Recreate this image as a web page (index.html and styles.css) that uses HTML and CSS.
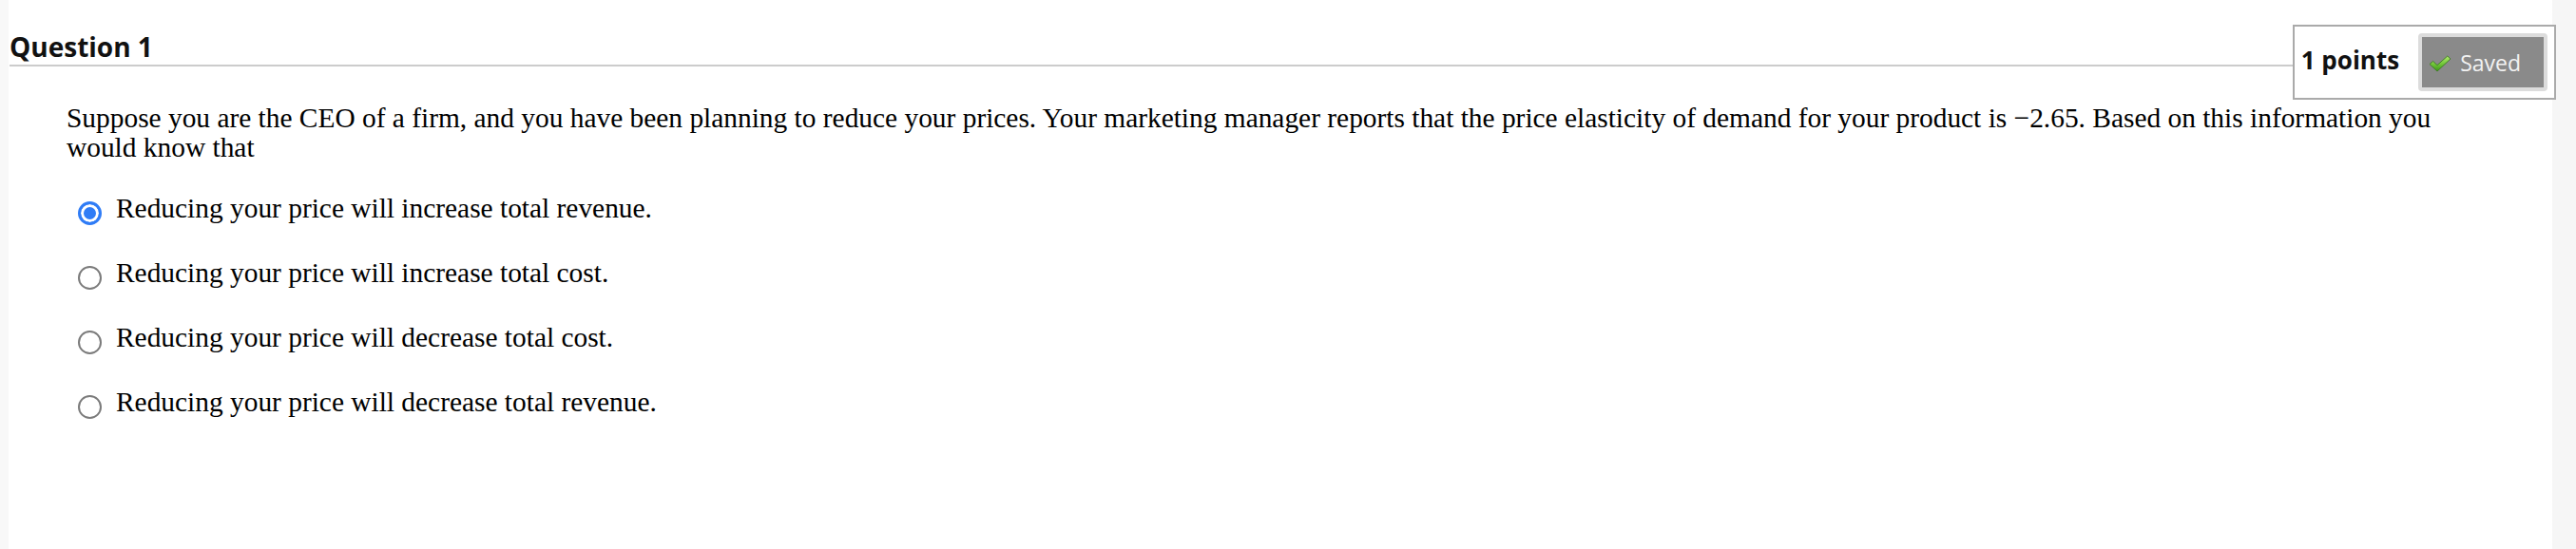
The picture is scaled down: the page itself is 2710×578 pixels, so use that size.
FILE: index.html
```html
<!DOCTYPE html>
<html lang="en">
<head>
<meta charset="utf-8">
<title>Question 1</title>
<link rel="stylesheet" href="styles.css">
</head>
<body>
<div class="page">
  <div class="gutter-left"></div>
  <main class="main">
    <div class="q-header">
      <h2 class="q-title">Question 1</h2>
      <div class="points-box">
        <span class="points">1 points</span>
        <div class="saved-btn">
          <svg class="check" width="24" height="18" viewBox="0 0 24 18" aria-hidden="true">
            <defs>
              <linearGradient id="g" x1="0" y1="0" x2="0" y2="1">
                <stop offset="0" stop-color="#b4ea6e"/>
                <stop offset="0.5" stop-color="#74c83a"/>
                <stop offset="1" stop-color="#3a9418"/>
              </linearGradient>
            </defs>
            <path d="M1 9.5 L4.6 6.4 L9 10.6 L19.8 1 L23 4 L9 17 Z" fill="url(#g)" stroke="#3c7a22" stroke-width="0.9" stroke-linejoin="round"/>
          </svg>
          <span class="saved-text">Saved</span>
        </div>
      </div>
    </div>
    <p class="q-text">Suppose you are the CEO of a firm, and you have been planning to reduce your prices. Your marketing manager reports that the price elasticity of demand for your product is −2.65. Based on this information you would know that</p>
    <div class="options">
      <label class="option"><input type="radio" name="q1" class="radio" checked><span>Reducing your price will increase total revenue.</span></label>
      <label class="option"><input type="radio" name="q1" class="radio"><span>Reducing your price will increase total cost.</span></label>
      <label class="option"><input type="radio" name="q1" class="radio"><span>Reducing your price will decrease total cost.</span></label>
      <label class="option"><input type="radio" name="q1" class="radio"><span>Reducing your price will decrease total revenue.</span></label>
    </div>
  </main>
  <div class="gutter-right"></div>
</div>
</body>
</html>
```

FILE: styles.css
```css
html, body {
  margin: 0;
  padding: 0;
  background: #ffffff;
}

.page {
  display: flex;
  min-height: 578px;
}

.gutter-left {
  width: 9px;
  flex: none;
  background: #f8f8f8;
}

.gutter-right {
  width: 25px;
  flex: none;
  background: #f6f6f6;
}

.main {
  flex: 1;
  min-width: 0;
  padding-left: 1px;
  background: #ffffff;
}

.q-header {
  display: flex;
  align-items: flex-start;
}

.q-title {
  flex: 1;
  margin: 31px 0 0;
  padding: 0 0 1px;
  font-family: "Open Sans", "DejaVu Sans", sans-serif;
  font-weight: 700;
  font-size: 28px;
  line-height: 36px;
  color: #111111;
  border-bottom: 2px solid #cccccc;
}

.points-box {
  position: relative;
  z-index: 1;
  margin-top: 26px;
  margin-right: -4px;
  display: flex;
  align-items: center;
  gap: 20px;
  padding: 7px;
  border: 2px solid #aaaaaa;
  background: #ffffff;
}

.points {
  font-family: "Open Sans", "DejaVu Sans", sans-serif;
  font-weight: 700;
  font-size: 26px;
  color: #111111;
  padding-bottom: 6px;
}

.saved-btn {
  display: flex;
  align-items: center;
  gap: 9px;
  height: 53px;
  padding: 0 24px 0 7px;
  border: 4px solid #dcdcdc;
  border-radius: 4px;
  background: #8a8a8a;
}

.check {
  display: block;
  flex: none;
  margin-top: 3px;
}

.saved-text {
  font-family: "Open Sans", "DejaVu Sans", sans-serif;
  font-weight: 400;
  font-size: 23px;
  color: #f2f2f2;
}

.q-text {
  margin: 4px 90px 0 60px;
  font-family: "Liberation Serif", "Times New Roman", serif;
  font-size: 29.4px;
  line-height: 31px;
  color: #000000;
}

.options {
  display: flex;
  flex-direction: column;
  gap: 35px;
  margin: 33px 0 0 72px;
}

.option {
  display: flex;
  align-items: flex-start;
  gap: 15px;
  font-family: "Liberation Serif", "Times New Roman", serif;
  font-size: 29.4px;
  line-height: 31px;
  color: #000000;
}

.radio {
  appearance: none;
  -webkit-appearance: none;
  flex: none;
  box-sizing: border-box;
  width: 25px;
  height: 25px;
  margin: 8px 0 0;
  border: 2px solid #7b7b7b;
  border-radius: 50%;
  background: #ffffff;
}

.radio:checked {
  border: 3px solid #2f7cf6;
  background: #2f7cf6;
  box-shadow: inset 0 0 0 3px #ffffff;
}
```
